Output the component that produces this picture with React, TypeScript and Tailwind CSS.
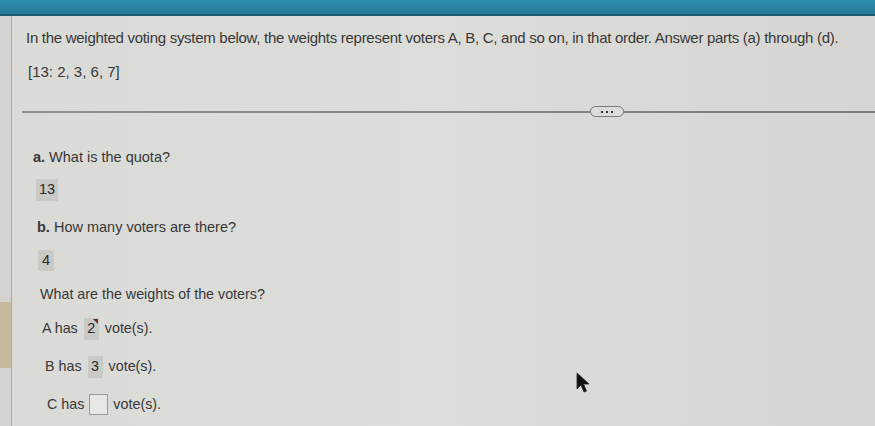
import React from "react";

function Cursor() {
  return (
    <svg className="absolute left-[576px] top-[372px]" width="16" height="22" viewBox="0 0 16 22">
      <path d="M1 1 L1 17 L5 13 L8 20 L10.5 19 L7.5 12 L13 12 Z" fill="#111" stroke="#222" strokeWidth="0.8" />
    </svg>
  );
}

function Box({ children, className = "" }: { children?: React.ReactNode; className?: string }) {
  return (
    <span className={"inline-flex items-center justify-center bg-[#c9c9c6] text-[#2a2a2a] " + className}>
      {children}
    </span>
  );
}

export default function App() {
  return (
    <div className="relative w-[875px] h-[426px] overflow-hidden bg-[#d8d8d5] text-[#333] font-['Liberation_Sans',Arial,sans-serif]">
      <div className="h-[14px] bg-gradient-to-b from-[#2f8fae] to-[#257c9a]" />
      <div className="h-[2px] bg-[#1d5a70]" />
      <div className="flex h-[410px]">
        <div className="w-[12px] shrink-0 flex flex-col bg-[#d4d3cf] border-r border-[#a9a9a6]">
          <div className="h-[286px]" />
          <div className="h-[66px] bg-[#c8b99c]" />
        </div>
        <div className="flex-1 flex flex-col bg-gradient-to-r from-[#dadad7] via-[#dcdcd9] to-[#d6d5d2]">
          <div className="pl-[14px] pt-[13px] text-[15px] tracking-[-0.28px] leading-[18px] text-[#383838] whitespace-nowrap">
            In the weighted voting system below, the weights represent voters A, B, C, and so on, in that order. Answer parts (a) through (d).
          </div>
          <div className="pl-[16px] pt-[16px] text-[15px] leading-[18px] text-[#383838]">[13: 2, 3, 6, 7]</div>
          <div className="relative mt-[30px] ml-[10px] h-[2px] bg-gradient-to-r from-[#8e8e8b] to-[#7c7c79]">
            <div className="absolute left-[568px] top-[-5px] w-[34px] h-[11px] rounded-full border border-[#7a7a78] bg-[#dcdcd9] flex items-center justify-center gap-[3px]">
              <span className="w-[2px] h-[2px] bg-[#333]" />
              <span className="w-[2px] h-[2px] bg-[#333]" />
              <span className="w-[2px] h-[2px] bg-[#333]" />
            </div>
          </div>
          <div className="pl-[21px] pt-[35px] text-[14.5px] leading-[18px] text-[#383838]">
            <span className="font-bold">a.</span> What is the quota?
          </div>
          <div className="pl-[24px] pt-[11px]">
            <Box className="w-[22px] h-[22px] text-[14.5px]">13</Box>
          </div>
          <div className="pl-[25px] pt-[17px] text-[14.5px] leading-[18px] text-[#383838]">
            <span className="font-bold">b.</span> How many voters are there?
          </div>
          <div className="pl-[26px] pt-[12px]">
            <Box className="w-[16px] h-[21px] text-[14.5px]">4</Box>
          </div>
          <div className="pl-[28px] pt-[13px] text-[14.3px] leading-[18px] text-[#383838]">What are the weights of the voters?</div>
          <div className="pl-[30px] pt-[15px] flex items-center gap-[6px] text-[14.3px] text-[#383838]">
            <span>A has</span>
            <Box className="w-[15px] h-[22px] relative">
              2
              <span className="absolute right-[1px] top-[1px] w-0 h-0 border-l-[5px] border-l-transparent border-t-[5px] border-t-[#6b2a1e]" />
            </Box>
            <span>vote(s).</span>
          </div>
          <div className="pl-[33px] pt-[16px] flex items-center gap-[6px] text-[14.3px] text-[#383838]">
            <span>B has</span>
            <Box className="w-[15px] h-[22px]">3</Box>
            <span>vote(s).</span>
          </div>
          <div className="pl-[35px] pt-[16px] flex items-center gap-[5px] text-[14.3px] text-[#383838]">
            <span>C has</span>
            <span className="w-[19px] h-[21px] border border-[#9a9a98] bg-[#e6e6e3]" />
            <span>vote(s).</span>
          </div>
        </div>
      </div>
      <Cursor />
    </div>
  );
}
